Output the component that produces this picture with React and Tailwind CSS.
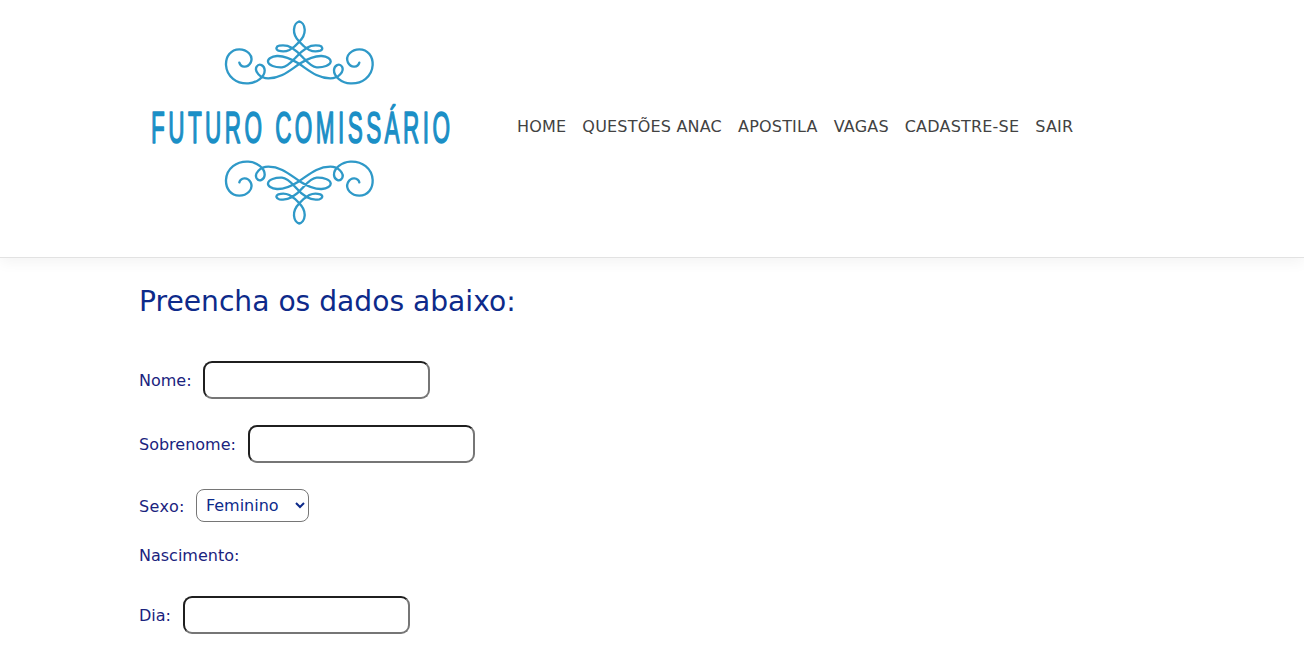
import React from "react";

const Half = () => (
  <path d="M298 158C302 172 322 176 332 158C342 136 320 118 298 118C272 118 257 140 258 165C260 200 290 222 325 220C350 219 375 200 374 180C373 166 358 158 350 170C342 184 360 205 385 205C425 205 450 180 481 160C505 145 525 137 545 138C562 139 573 147 572 155C571 166 550 173 530 172C515 171 503 158 491 145C480 132 470 122 455 113C445 107 430 105 418 107C408 109 406 118 415 122C428 126 438 125 448 120C462 112 472 102 478 95C488 85 495 72 494 58C493 45 486 35 477 35" />
);

const Ornament = () => (
  <g fill="none" stroke="#2f99c8" strokeWidth="7" strokeLinecap="round" strokeLinejoin="round">
    <Half />
    <g transform="translate(956 0) scale(-1 1)">
      <Half />
    </g>
  </g>
);

// logo: desenhado em unidades do zoom 3x
const Logo = () => (
  <svg viewBox="0 0 960 675" className="block w-[320px] h-[225px]">
    <Ornament />
    <g transform="translate(0 675) scale(1 -1)">
      <Ornament />
    </g>
    <g transform="translate(33 400) scale(1.5 3)">
      <text
        x="0"
        y="0"
        textLength="598"
        lengthAdjust="spacing"
        fill="#1b8fc6"
        stroke="#1b8fc6"
        strokeWidth="1.3"
        strokeLinejoin="round"
        vectorEffect="non-scaling-stroke"
        fontFamily="Liberation Sans, sans-serif"
        fontSize="45"
      >
        FUTURO COMISSÁRIO
      </text>
    </g>
  </svg>
);

const navItems = ["HOME", "QUESTÕES ANAC", "APOSTILA", "VAGAS", "CADASTRE-SE", "SAIR"];

const TextField = ({ label, gap }) => (
  <div className={`flex items-center h-[37px] ${gap}`}>
    <label className="pt-0.5">{label}</label>
    <input
      type="text"
      className="w-[227px] h-[38px] rounded-[9px] border-2 border-t-[#1f1f1f] border-l-[#1f1f1f] border-r-[#767676] border-b-[#767676] bg-white"
    />
  </div>
);

export default function App() {
  return (
    <div className="min-h-screen bg-white font-['DejaVu_Sans',sans-serif] text-[#1a237e]">
      <header className="flex items-start h-[258px] pt-[10px] pl-[140px] border-b border-[#e2e2e2] shadow-[0_4px_14px_rgba(0,0,0,0.05)]">
        <Logo />
        <nav className="flex gap-4 ml-[57px] mt-[105px] text-base tracking-[0.2px] text-[#424242]">
          {navItems.map((item) => (
            <a key={item} href="#">
              {item}
            </a>
          ))}
        </nav>
      </header>

      <main className="pl-[139px] text-base">
        <h1 className="pt-[25px] text-[28.15px] leading-[38px] text-[#0d2a8a]">Preencha os dados abaixo:</h1>
        <div className="flex flex-col items-start gap-[27px] mt-10">
          <TextField label="Nome:" gap="gap-[11px]" />
          <TextField label="Sobrenome:" gap="gap-3" />
          <div className="flex items-center gap-[11px]">
            <label className="pt-0.5 tracking-[0.4px]">Sexo:</label>
            <select className="w-[113px] h-[33px] pl-[5px] rounded-lg border border-[#767676] bg-white text-[#0d2a8a]">
              <option>Feminino</option>
              <option>Masculino</option>
            </select>
          </div>
          <p className="-mt-[3px] leading-5">Nascimento:</p>
          <div className="mt-[3px]">
            <TextField label="Dia:" gap="gap-3" />
          </div>
        </div>
      </main>
    </div>
  );
}
